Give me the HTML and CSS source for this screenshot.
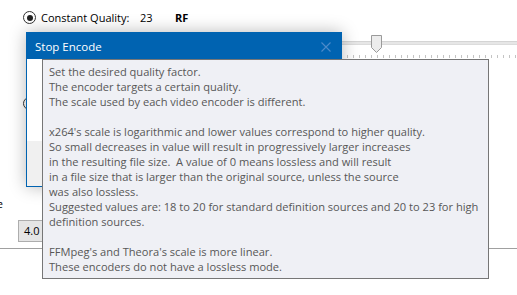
FILE: index.html
```html
<!DOCTYPE html>
<html>
<head>
<meta charset="utf-8">
<link rel="stylesheet" href="styles.css">
</head>
<body>
<div class="app">
  <div class="row quality-row">
    <span class="radio checked"></span>
    <span class="label">Constant Quality:</span>
    <span class="value">23</span>
    <span class="unit">RF</span>
  </div>
  <div class="slider">
    <div class="track"></div>
    <div class="ticks"></div>
    <svg class="thumb" width="11" height="18" viewBox="0 0 11 18"><path d="M0.5 0.5 H10.5 V12.5 L5.5 17.5 L0.5 12.5 Z" fill="#ececec" stroke="#9a9a9a"/></svg>
  </div>
  <div class="row bitrate-row">
    <span class="radio"></span>
  </div>
  <div class="cut-label"><span>Framerate</span></div>
  <div class="combo">4.0</div>
  <div class="divider"></div>
</div>

<div class="dialog">
  <div class="titlebar">
    <span class="title">Stop Encode</span>
    <svg class="close" width="10" height="10" viewBox="0 0 10 10"><path d="M0.5 0.5 L9.5 9.5 M9.5 0.5 L0.5 9.5" stroke="#4d8bca" stroke-width="1.1" fill="none"/></svg>
  </div>
  <div class="dialog-body"></div>
  <div class="dialog-footer"></div>
</div>

<div class="tooltip">
  <p>Set the desired quality factor.<br>The encoder targets a certain quality.<br>The scale used by each video encoder is different.</p>
  <p>x264's scale is logarithmic and lower values correspond to higher quality.<br>So small decreases in value will result in progressively larger increases<br>in the resulting file size.&nbsp; A value of 0 means lossless and will result<br>in a file size that is larger than the original source, unless the source<br>was also lossless.<br>Suggested values are: 18 to 20 for standard definition sources and 20 to 23 for high<br>definition sources.</p>
  <p>FFMpeg's and Theora's scale is more linear.<br>These encoders do not have a lossless mode.</p>
</div>
</body>
</html>
```

FILE: styles.css
```css
html, body {
  margin: 0;
  padding: 0;
  background: #ffffff;
}
body {
  width: 517px;
  height: 295px;
  overflow: hidden;
  position: relative;
  font-family: "Open Sans", "Noto Sans", sans-serif;
  font-size: 11px;
  color: #000;
}
.app {
  display: flex;
  flex-direction: column;
}
.row {
  display: flex;
  align-items: center;
  height: 13px;
  padding-left: 23px;
}
.quality-row {
  margin-top: 11px;
}
.radio {
  box-sizing: border-box;
  width: 13px;
  height: 13px;
  border: 1px solid #333;
  border-radius: 50%;
  background: #fff;
  display: flex;
  align-items: center;
  justify-content: center;
  flex: none;
}
.radio.checked::after {
  content: "";
  width: 6px;
  height: 6px;
  border-radius: 50%;
  background: #222;
}
.label {
  margin-left: 5px;
  width: 99px;
  white-space: nowrap;
}
.value {
  width: 35px;
}
.unit {
  font-weight: 700;
}
.slider {
  position: relative;
  margin-top: 11px;
  margin-left: 200px;
  height: 23px;
  padding-top: 6px;
  box-sizing: border-box;
}
.track {
  height: 4px;
  box-sizing: border-box;
  background: #e6e6e6;
  border-top: 1px solid #d4d4d4;
  border-bottom: 1px solid #dcdcdc;
}
.ticks {
  margin-top: 10px;
  height: 3px;
  background: repeating-linear-gradient(to right, #c4c4c4 0 1px, transparent 1px 6px);
  background-position: 3px 0;
}
.thumb {
  position: absolute;
  left: 171px;
  top: 0;
}
.bitrate-row {
  margin-top: 39px;
}
.cut-label {
  margin-top: 86px;
  width: 3px;
  overflow: hidden;
  display: flex;
  justify-content: flex-end;
  line-height: 15px;
  white-space: nowrap;
}
.combo {
  margin-top: 9px;
  margin-left: 18px;
  width: 70px;
  height: 22px;
  box-sizing: border-box;
  border: 1px solid #adadad;
  background: #e5e5e5;
  padding-left: 5px;
  line-height: 20px;
}
.divider {
  margin-top: 6px;
  height: 1px;
  background: #a0a0a0;
}

.dialog {
  position: absolute;
  left: 26px;
  top: 32px;
  width: 316px;
  height: 155px;
  box-sizing: border-box;
  border: 1px solid #0063b1;
  background: #fff;
  display: flex;
  flex-direction: column;
  box-shadow: 0 0 16px rgba(0, 0, 0, 0.28);
}
.titlebar {
  height: 26px;
  background: #0063b1;
  color: #fff;
  display: flex;
  align-items: center;
  justify-content: space-between;
  padding: 1px 10px 0 8px;
  box-sizing: border-box;
  font-size: 11.5px;
}
.dialog-body {
  flex: 1;
  background: #fff;
}
.dialog-footer {
  height: 45px;
  background: #f0f0f0;
}

.tooltip {
  position: absolute;
  left: 42px;
  top: 59px;
  width: 447px;
  height: 220px;
  box-sizing: border-box;
  border: 1px solid #767676;
  background: #eff0f5;
  color: #575757;
  padding: 4px 6px;
  font-size: 11.1px;
  line-height: 15px;
  white-space: nowrap;
}
.tooltip p {
  margin: 0 0 15px 0;
}
```
